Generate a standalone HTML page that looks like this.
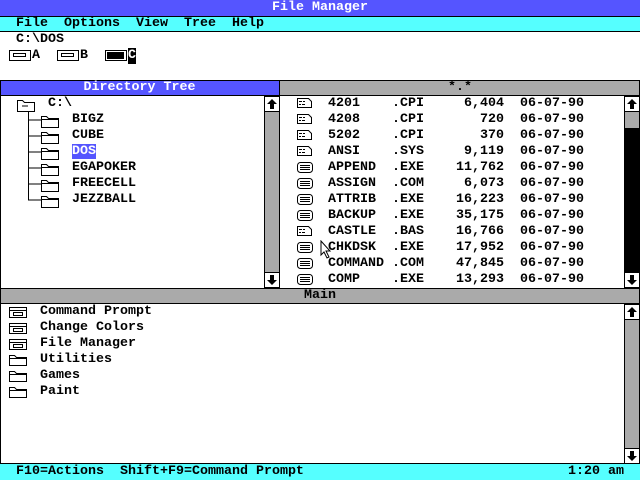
<!DOCTYPE html><html><head><style>
*{margin:0;padding:0;box-sizing:border-box}
body{width:640px;height:480px;background:#fff;position:relative;overflow:hidden;font-family:"Liberation Mono",monospace;font-weight:bold;font-size:13.33px;line-height:16px;color:#000}
.a{position:absolute;white-space:pre}
.b{position:absolute}
svg{position:absolute}
</style></head><body>
<div class="b" style="left:0;top:0;width:640px;height:16px;background:#5555ff"></div>
<div class="a" style="left:0;top:0;width:640px;text-align:center;color:#fff">File Manager</div>
<div class="b" style="left:0;top:16px;width:640px;height:16px;background:#55ffff;border-top:1px solid #000;border-bottom:1px solid #000"></div>
<div class="a" style="left:16px;top:16px">File  Options  View  Tree  Help</div>
<div class="a" style="left:16px;top:32px">C:\DOS</div>
<svg style="left:9px;top:50px" width="128" height="12">
<rect x="0.5" y="0.5" width="21" height="10" fill="none" stroke="#000"/><rect x="4.5" y="3.5" width="12" height="3" fill="none" stroke="#000"/>
<rect x="48.5" y="0.5" width="21" height="10" fill="none" stroke="#000"/><rect x="52.5" y="3.5" width="12" height="3" fill="none" stroke="#000"/>
<rect x="96.5" y="0.5" width="21" height="10" fill="#fff" stroke="#000"/><rect x="98" y="2" width="17" height="7" fill="#000"/>
</svg>
<div class="a" style="left:32px;top:48px">A</div>
<div class="a" style="left:80px;top:48px">B</div>
<div class="a" style="left:128px;top:48px;background:#000;color:#fff;width:8px">C</div>
<div class="b" style="left:0;top:80px;width:640px;height:1px;background:#000"></div>
<div class="b" style="left:0;top:81px;width:279px;height:14px;background:#5555ff"></div>
<div class="b" style="left:280px;top:81px;width:360px;height:14px;background:#aaa"></div>
<div class="a" style="left:0;top:80px;width:279px;text-align:center;color:#fff">Directory Tree</div>
<div class="a" style="left:280px;top:80px;width:360px;text-align:center">*.*</div>
<div class="b" style="left:0;top:95px;width:640px;height:1px;background:#000"></div>
<div class="b" style="left:0;top:80px;width:1px;height:384px;background:#000"></div>
<div class="b" style="left:279px;top:80px;width:1px;height:208px;background:#000"></div>
<div class="b" style="left:639px;top:80px;width:1px;height:384px;background:#000"></div>
<div class="b" style="left:264px;top:96px;width:15px;height:192px;background:#aaa;border-left:1px solid #000"></div>
<div class="b" style="left:264px;top:96px;width:15px;height:16px;background:#fff;border:1px solid #000;border-right:0"></div>
<div class="b" style="left:264px;top:272px;width:15px;height:16px;background:#fff;border:1px solid #000;border-right:0"></div>
<svg style="left:266px;top:98px" width="12" height="12"><path d="M6 1L11 6H8V11H4V6H1Z" fill="#000"/></svg>
<svg style="left:266px;top:274px" width="12" height="12"><path d="M6 11L11 6H8V1H4V6H1Z" fill="#000"/></svg>
<svg style="left:0;top:96px" width="64" height="112" fill="#fff" stroke="#000">
<path d="M17.5 4.5h5l2 2h10v9h-17z"/><path d="M22 10h6"/>
<path d="M28.5 16v88M28 24h14M28 40h14M28 56h14M28 72h14M28 88h14M28 104h14"/>
<g id="f"><path d="M41.5 20.5h5l2 2h10v9h-17z"/><path d="M41.5 23.5h17"/></g>
<use href="#f" y="16"/><use href="#f" y="32"/><use href="#f" y="48"/><use href="#f" y="64"/><use href="#f" y="80"/>
</svg>
<div class="a" style="left:48px;top:96px">C:\</div>
<div class="a" style="left:72px;top:112px">BIGZ
CUBE
<span style="background:#5555ff;color:#fff">DOS</span>
EGAPOKER
FREECELL
JEZZBALL</div>
<div class="b" style="left:624px;top:96px;width:15px;height:192px;background:#000;border-left:1px solid #000"></div>
<div class="b" style="left:625px;top:112px;width:14px;height:16px;background:#aaa"></div>
<div class="b" style="left:624px;top:96px;width:15px;height:16px;background:#fff;border:1px solid #000;border-right:0"></div>
<div class="b" style="left:624px;top:272px;width:15px;height:16px;background:#fff;border:1px solid #000;border-right:0"></div>
<svg style="left:626px;top:98px" width="12" height="12"><path d="M6 1L11 6H8V11H4V6H1Z" fill="#000"/></svg>
<svg style="left:626px;top:274px" width="12" height="12"><path d="M6 11L11 6H8V1H4V6H1Z" fill="#000"/></svg>
<svg style="left:296px;top:96px" width="20" height="192" fill="none" stroke="#000">
<defs><g id="d"><path d="M1.5 2.5h11l3 3v6h-14z"/><path d="M3 5.5h3M7 5.5h2M3 8.5h2M6 8.5h3"/></g>
<g id="p"><rect x="1.5" y="2.5" width="15" height="10" rx="3"/><path d="M4 5.5h10M4 7.5h10M4 9.5h10"/></g></defs>
<use href="#d"/><use href="#d" y="16"/><use href="#d" y="32"/><use href="#d" y="48"/>
<use href="#p" y="64"/><use href="#p" y="80"/><use href="#p" y="96"/><use href="#p" y="112"/>
<use href="#d" y="128"/><use href="#p" y="144"/><use href="#p" y="160"/><use href="#p" y="176"/>
</svg>
<div class="a" style="left:328px;top:96px">4201    .CPI     6,404  06-07-90
4208    .CPI       720  06-07-90
5202    .CPI       370  06-07-90
ANSI    .SYS     9,119  06-07-90
APPEND  .EXE    11,762  06-07-90
ASSIGN  .COM     6,073  06-07-90
ATTRIB  .EXE    16,223  06-07-90
BACKUP  .EXE    35,175  06-07-90
CASTLE  .BAS    16,766  06-07-90
CHKDSK  .EXE    17,952  06-07-90
COMMAND .COM    47,845  06-07-90
COMP    .EXE    13,293  06-07-90</div>
<svg style="left:320px;top:240px" width="12" height="20"><path d="M1 1V15L4 12L7 18L9 17L6 11H10Z" fill="#fff" stroke="#000"/></svg>
<div class="b" style="left:0;top:288px;width:640px;height:1px;background:#000"></div>
<div class="b" style="left:1px;top:289px;width:638px;height:14px;background:#aaa"></div>
<div class="a" style="left:0;top:288px;width:640px;text-align:center">Main</div>
<div class="b" style="left:0;top:303px;width:640px;height:1px;background:#000"></div>
<div class="b" style="left:624px;top:304px;width:15px;height:160px;background:#aaa;border-left:1px solid #000"></div>
<div class="b" style="left:624px;top:304px;width:15px;height:16px;background:#fff;border:1px solid #000;border-right:0"></div>
<div class="b" style="left:624px;top:448px;width:15px;height:16px;background:#fff;border:1px solid #000;border-right:0"></div>
<svg style="left:626px;top:306px" width="12" height="12"><path d="M6 1L11 6H8V11H4V6H1Z" fill="#000"/></svg>
<svg style="left:626px;top:450px" width="12" height="12"><path d="M6 11L11 6H8V1H4V6H1Z" fill="#000"/></svg>
<svg style="left:8px;top:304px" width="22" height="96" fill="none" stroke="#000">
<defs><g id="m"><rect x="1.5" y="3.5" width="17" height="10"/><path d="M2 6.5h16"/><rect x="5.5" y="8.5" width="9" height="3"/></g>
<g id="g"><path d="M1.5 3.5h5l2 2h10v8h-17z"/><path d="M1.5 6.5h17"/></g></defs>
<use href="#m"/><use href="#m" y="16"/><use href="#m" y="32"/><use href="#g" y="48"/><use href="#g" y="64"/><use href="#g" y="80"/>
</svg>
<div class="a" style="left:40px;top:304px">Command Prompt
Change Colors
File Manager
Utilities
Games
Paint</div>
<div class="b" style="left:0;top:463px;width:640px;height:1px;background:#000"></div>
<div class="b" style="left:0;top:464px;width:640px;height:16px;background:#55ffff"></div>
<div class="a" style="left:16px;top:464px">F10=Actions  Shift+F9=Command Prompt</div>
<div class="a" style="left:568px;top:464px">1:20 am</div>
</body></html>
